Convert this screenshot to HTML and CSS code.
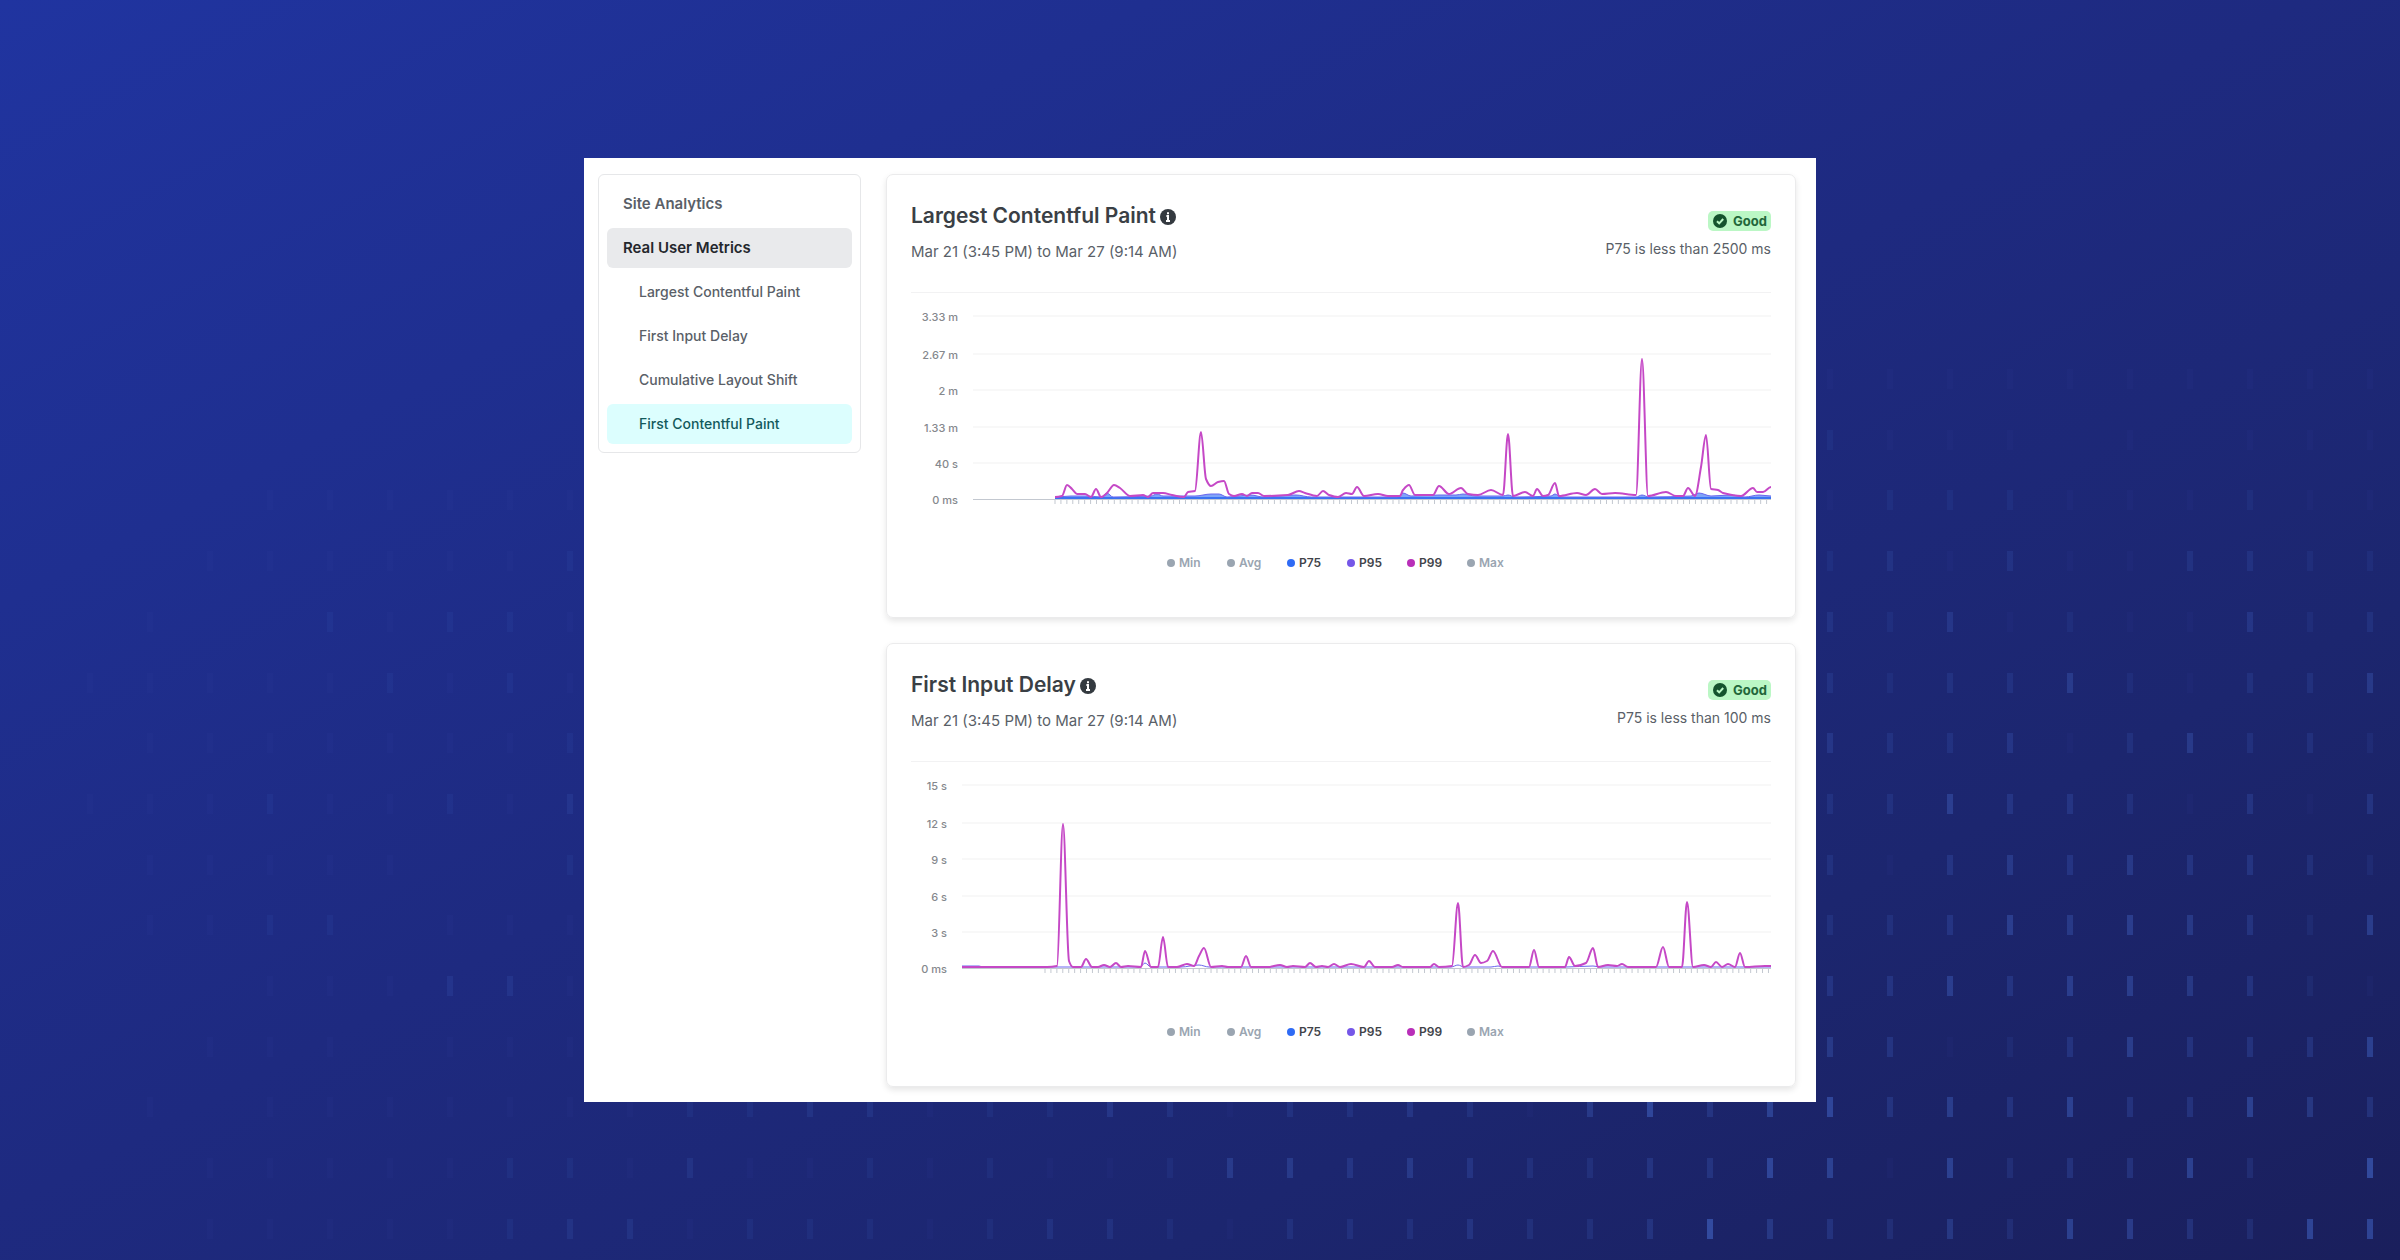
FILE: index.html
```html
<!DOCTYPE html>
<html lang="en">
<head>
<meta charset="utf-8">
<title>Real User Metrics</title>
<link rel="stylesheet" href="styles.css">
</head>
<body>
<svg class="backdrop" viewBox="0 0 2400 1260" preserveAspectRatio="xMidYMid slice" aria-hidden="true"></svg>

<div class="panel">
  <nav class="sidebar">
    <a class="nav-item" href="#site">Site Analytics</a>
    <a class="nav-item nav-current" href="#rum">Real User Metrics</a>
    <a class="nav-item nav-sub" href="#lcp">Largest Contentful Paint</a>
    <a class="nav-item nav-sub" href="#fid">First Input Delay</a>
    <a class="nav-item nav-sub" href="#cls">Cumulative Layout Shift</a>
    <a class="nav-item nav-sub nav-active" href="#fcp">First Contentful Paint</a>
  </nav>

  <main class="cards">
    <section class="card" id="lcp">
      <header class="card-head">
        <div class="heading">
          <h2 class="title">Largest Contentful Paint
            <svg class="info" viewBox="0 0 16 16"><circle cx="8" cy="8" r="8"/><path d="M8 3.2v2M6.4 7H8v5M6 12h4"/></svg>
          </h2>
          <p class="range">Mar 21 (3:45 PM) to Mar 27 (9:14 AM)</p>
        </div>
        <div class="status">
          <span class="badge"><svg class="check" viewBox="0 0 16 16"><circle cx="8" cy="8" r="7"/><path d="M5 8.2l2.2 2.2L11.2 6"/></svg>Good</span>
          <p class="rule">P75 is less than 2500 ms</p>
        </div>
      </header>
      <svg class="chart" viewBox="0 0 860 224" data-chart="lcp"></svg>
      <div class="legend">
        <button type="button" class="key off">Min</button>
        <button type="button" class="key off">Avg</button>
        <button type="button" class="key p75">P75</button>
        <button type="button" class="key p95">P95</button>
        <button type="button" class="key p99">P99</button>
        <button type="button" class="key off">Max</button>
      </div>
    </section>

    <section class="card" id="fid">
      <header class="card-head">
        <div class="heading">
          <h2 class="title">First Input Delay
            <svg class="info" viewBox="0 0 16 16"><circle cx="8" cy="8" r="8"/><path d="M8 3.2v2M6.4 7H8v5M6 12h4"/></svg>
          </h2>
          <p class="range">Mar 21 (3:45 PM) to Mar 27 (9:14 AM)</p>
        </div>
        <div class="status">
          <span class="badge"><svg class="check" viewBox="0 0 16 16"><circle cx="8" cy="8" r="7"/><path d="M5 8.2l2.2 2.2L11.2 6"/></svg>Good</span>
          <p class="rule">P75 is less than 100 ms</p>
        </div>
      </header>
      <svg class="chart" viewBox="0 0 860 224" data-chart="fid"></svg>
      <div class="legend">
        <button type="button" class="key off">Min</button>
        <button type="button" class="key off">Avg</button>
        <button type="button" class="key p75">P75</button>
        <button type="button" class="key p95">P95</button>
        <button type="button" class="key p99">P99</button>
        <button type="button" class="key off">Max</button>
      </div>
    </section>
  </main>
</div>
<script src="charts.js"></script>
</body>
</html>
```
FILE: styles.css
```css
* { box-sizing: border-box; }

body {
  margin: 0;
  min-height: 100vh;
  display: grid;
  place-items: center;
  background: linear-gradient(to bottom right, #2034a0 0%, #1e2a80 48%, #1c266f 74%, #1a1f5c 100%);
  font-family: Inter, "Liberation Sans", sans-serif;
  color: #4b5058;
}

.backdrop {
  position: absolute;
  inset: 0;
  width: 100%;
  height: 100%;
  fill: #3c5bb6;
}

.panel {
  position: relative;
  display: flex;
  align-items: flex-start;
  gap: 25px;
  width: 100%;
  max-width: 1232px;
  padding: 16px 20px 15px 14px;
  background: #fff;
}

.sidebar {
  flex: 0 0 263px;
  display: flex;
  flex-direction: column;
  gap: 4px;
  padding: 9px 8px 8px;
  border: 1px solid #e6e7e9;
  border-radius: 6px;
}

.nav-item {
  padding: 0 16px;
  border-radius: 6px;
  font-size: 15px;
  font-weight: 600;
  line-height: 40px;
  color: #5a5f68;
  text-decoration: none;
}
.nav-current { background: #e9eaec; color: #24272c; }
.nav-sub { padding-left: 32px; font-size: 14px; font-weight: 500; }
.nav-active { background: #dcfefe; color: #125a5c; }

.cards {
  flex: 1;
  display: flex;
  flex-direction: column;
  gap: 25px;
}

.card {
  padding: 25px 24px 46px;
  border: 1px solid #ebebec;
  border-radius: 7px;
  box-shadow: 0 3px 6px rgba(0, 0, 0, .1);
}

.card-head {
  display: flex;
  justify-content: space-between;
  padding-bottom: 28px;
  border-bottom: 1px solid #f2f2f3;
}
.heading { display: grid; gap: 8px; }
.title {
  display: flex;
  align-items: center;
  gap: 4px;
  margin: 0;
  font-size: 21px;
  font-weight: 600;
  line-height: 32px;
  color: #3a3f45;
}
.info { width: 16px; height: 16px; margin-top: 2px; fill: #343a40; }
.info path { fill: none; stroke: #fff; stroke-width: 2; }
.range { margin: 0; font-size: 15px; line-height: 24px; color: #5a5f68; }

.status {
  display: flex;
  flex-direction: column;
  align-items: flex-end;
  gap: 8px;
  padding-top: 11px;
}
.badge {
  display: flex;
  align-items: center;
  gap: 5px;
  padding: 0 4px;
  border-radius: 5px;
  background: #bbf7c5;
  font-size: 13px;
  font-weight: 700;
  line-height: 20px;
  color: #22663a;
}
.check { width: 16px; height: 16px; fill: #14532d; }
.check path { fill: none; stroke: #bbf7c5; stroke-width: 2; }
.rule { margin: 0; font-size: 14px; line-height: 20px; color: #5a5f68; }

.chart { display: block; width: 100%; }
.grid { stroke: #f8f8f8; stroke-width: 2; }
.axis { stroke: #c3c8d0; stroke-width: 1; }
.label { font-size: 11px; font-weight: 500; fill: #85888d; text-anchor: end; }
.line { fill: none; stroke-width: 2; stroke-linejoin: round; }
.line-p75 { stroke: #3b72f2; }
.line-p95 { stroke: #6a66ee; stroke-width: 1; }
.line-p99 { stroke: #c548c6; }
.band { fill: #7fa4f8; }

.legend {
  display: grid;
  grid-template-columns: repeat(6, 60px);
  justify-content: center;
  padding: 38px 0 0 12px;
}
.key {
  display: flex;
  align-items: center;
  gap: 4px;
  padding: 0;
  border: 0;
  background: none;
  font: 600 12px/16px Inter, "Liberation Sans", sans-serif;
  color: #3f4349;
}
.key::before {
  content: "";
  width: 8px;
  height: 8px;
  border-radius: 50%;
  background: #9aa5b1;
}
.off { color: #9aa5b1; }
.p75::before { background: #2f6bf5; }
.p95::before { background: #7557e8; }
.p99::before { background: #b92fb9; }
```
FILE: charts.js
```js
const SVG = 'http://www.w3.org/2000/svg';

function add(parent, name, attrs, text) {
  const el = document.createElementNS(SVG, name);
  for (const key in attrs) el.setAttribute(key, attrs[key]);
  if (text) el.textContent = text;
  parent.appendChild(el);
}

/* Background dashes: one digit per column, 0 (hidden) to 9 (brightest). */
const dashes = [
  '0000000000000000000000000000001111111111',
  '0000000000000000000000000000002111010111',
  '0000111111000000000000000000001222111211',
  '0001111112000000000000000000002313113322',
  '0010021221000000000000000000003241211423',
  '0111112121000000000000000000003233521335',
  '0011111112000000000000000000004334135332',
  '0111211213000000000000000000003364431414',
  '0011111002000000000000000000003145454432',
  '0011220111000000000000000000003346565426',
  '0000111331000000000000000000004464665421',
  '0001110111000000000000000000005412464447',
  '0010111111122331224313343158478464744754',
  '0001111122131121211255454334487173447309',
  '0001111123312221233213334334954353764388'
];
const backdrop = document.querySelector('.backdrop');
dashes.forEach((row, r) => [...row].forEach((level, c) => {
  if (level > 0) {
    add(backdrop, 'rect', {
      x: 27 + 60 * c, y: Math.round(369 + 60.7 * r), width: 6, height: 20, opacity: level * 0.08 - 0.02
    });
  }
}));

/* Each series is x, height above the baseline, x, height... */
const charts = {
  lcp: {
    labels: ['3.33 m', '2.67 m', '2 m', '1.33 m', '40 s', '0 ms'],
    start: 62, ticks: 144, floor: 1,
    p99: [144,2,151,3,156,14,161,10,166,5,174,5,180,2,185,10,190,2,196,6,203,14,209,11,219,3,232,4,237,2,242,6,252,6,261,4,273,2,277,7,284,8,290,67,295,20,300,13,307,17,313,18,318,5,323,3,331,5,336,3,341,6,347,6,353,3,377,4,388,8,394,6,406,3,412,8,418,4,427,2,435,6,441,5,446,12,453,3,467,5,477,3,489,3,492,9,498,14,504,4,522,4,528,13,538,5,550,11,557,5,567,4,580,9,592,4,597,65,602,3,614,7,622,3,626,10,632,3,637,4,644,16,648,3,666,6,675,4,684,10,691,5,704,6,725,4,731,140,737,3,755,7,765,3,772,3,777,11,784,3,790,32,795,64,800,10,807,9,812,6,830,3,842,11,846,7,852,7,860,12],
    p95: [144,2,160,3,175,3,190,2,196,6,202,2,240,3,246,5,252,3,284,3,300,5,308,5,316,2,340,4,352,2,385,4,400,2,486,2,492,6,500,3,528,4,545,4,552,5,565,3,592,3,597,4,604,2,640,3,644,5,650,2,725,2,731,4,738,2,780,3,788,6,800,3,820,4,834,2,848,4,860,3],
    p75: [144,1,860,1]
  },
  fid: {
    labels: ['15 s', '12 s', '9 s', '6 s', '3 s', '0 ms'],
    start: 51, ticks: 134, floor: 0,
    p99: [51,1,68,1,129,1,136,1,146,2,152,144,158,7,162,1,170,1,175,9,181,1,187,1,193,3,199,1,205,5,210,1,217,2,230,1,234,17,240,1,247,1,252,31,257,1,266,1,276,4,283,2,288,12,293,20,300,1,311,2,317,1,330,1,335,12,340,1,357,1,369,3,376,1,382,2,394,1,399,5,405,1,411,2,417,1,423,4,429,1,440,4,453,1,458,7,464,1,481,1,487,3,492,1,519,1,523,4,528,1,541,2,547,65,552,1,558,3,564,13,570,5,576,7,582,17,591,1,618,1,623,18,628,1,654,1,658,11,664,2,675,5,682,20,687,1,697,3,706,2,711,4,717,1,745,1,752,21,758,1,771,1,776,66,782,1,793,3,800,1,805,6,811,1,817,4,824,1,829,15,834,1,854,2,860,2],
    p95: [51,2,68,2,72,1,229,1,234,5,240,1,270,1,288,3,298,1,540,1,547,3,553,1,580,1,587,2,593,1,655,1,682,2,690,1,860,1],
    p75: [51,1,860,1]
  }
};

const BASE = 206;

/* Monotone cubic curve through the points, so peaks never overshoot. */
function curve(values) {
  const p = [];
  for (let i = 0; i < values.length; i += 2) p.push([values[i], BASE - values[i + 1]]);
  const slope = p.slice(1).map((q, i) => (q[1] - p[i][1]) / (q[0] - p[i][0]));
  const tangent = p.map((_, i) => {
    const a = slope[i - 1], b = slope[i];
    if (a === undefined || b === undefined || a * b <= 0) return 0;
    return 2 * a * b / (a + b);
  });
  let d = `M${p[0][0]} ${p[0][1]}`;
  for (let i = 1; i < p.length; i++) {
    const h = (p[i][0] - p[i - 1][0]) / 3;
    d += `C${p[i - 1][0] + h} ${p[i - 1][1] + tangent[i - 1] * h} ${p[i][0] - h} ${p[i][1] - tangent[i] * h} ${p[i][0]} ${p[i][1]}`;
  }
  return d;
}

document.querySelectorAll('.chart').forEach(svg => {
  const data = charts[svg.dataset.chart];
  [23, 61, 97, 134, 170, BASE].forEach((y, i) => {
    add(svg, 'text', { class: 'label', x: data.start - 15, y: y + 5 }, data.labels[i]);
    if (y < BASE) add(svg, 'line', { class: 'grid', x1: data.start, x2: 860, y1: y, y2: y });
  });
  add(svg, 'line', { class: 'axis', x1: data.start, x2: 860, y1: BASE + 0.5, y2: BASE + 0.5 });
  for (let x = data.ticks; x <= 860; x += 5.93) {
    add(svg, 'line', { class: 'axis', x1: x, x2: x, y1: BASE, y2: BASE + 5 });
  }
  if (data.floor) add(svg, 'path', { class: 'band', d: curve(data.p95) + `V${BASE}H144Z` });
  if (data.floor) add(svg, 'path', { class: 'line line-p75', d: curve(data.p75) });
  add(svg, 'path', { class: 'line line-p95', d: curve(data.p95) });
  add(svg, 'path', { class: 'line line-p99', d: curve(data.p99) });
});
```
